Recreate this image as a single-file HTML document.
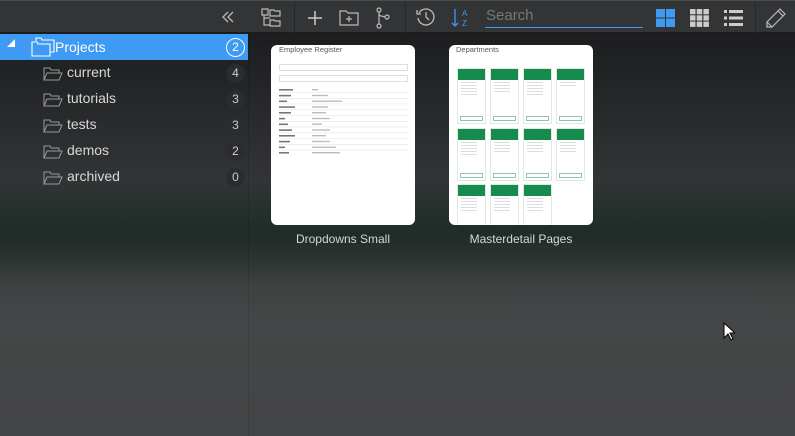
<!DOCTYPE html>
<html><head><meta charset="utf-8"><style>
*{box-sizing:border-box;margin:0;padding:0}
body{width:795px;height:436px;overflow:hidden;position:relative;font-family:"Liberation Sans",sans-serif;
background:linear-gradient(180deg,#1b1c1e 0px,#1d1e20 40px,#2a2c2e 130px,#323436 180px,#24302b 215px,#1f2c27 235px,#2d3431 260px,#3f4142 285px,#454647 320px,#434445 436px);}
.tb{position:absolute;left:0;top:0;width:795px;height:33px;background:#333436;border-top:1px solid #4a4b4d;border-bottom:1px solid #1a1a1b}
.sep{position:absolute;top:1px;width:1px;height:32px;background:#26272a}
.ic{position:absolute}
.side-line{position:absolute;left:248px;top:33px;width:1px;height:403px;background:rgba(0,0,0,.12)}
.sel{position:absolute;left:0;top:34px;width:248px;height:26px;background:#3e9af3}
.row{position:absolute;left:0;width:248px;height:26px;color:#d8d8d8;font-size:14px}
.row .t{position:absolute;left:67px;top:4px}
.badge{position:absolute;left:226px;top:4px;width:19px;height:19px;border-radius:50%;background:#2b2c2e;color:#ccc;font-size:12px;text-align:center;line-height:19px}
.card{position:absolute;top:45px;width:144px;height:180px;background:#fff;border-radius:6px;overflow:hidden}
.lbl{position:absolute;top:232px;color:#d6d6d6;font-size:12px;text-align:center;width:170px}
.dc{position:absolute;width:29px;border:1px solid #dfe8e3;background:#fff}
.dc .h{height:11px;background:#178a4e}
.dc .b{position:absolute;left:2px;right:2px;bottom:2px;height:5px;border:1px solid #8cc8a8}
.dc i{display:block;height:1px;background:#ddd;margin:2px 3px 0;width:60%}
</style></head><body>
<div class="tb">
  <svg class="ic" style="left:220px;top:9px" width="16" height="14" viewBox="0 0 16 14" fill="none" stroke="#bbb" stroke-width="1.3"><path d="M8 2L3 7l5 5M13 2L8 7l5 5"/></svg>
  <svg class="ic" style="left:260px;top:7px" width="22" height="20" viewBox="0 0 22 20" fill="none" stroke="#bbb" stroke-width="1.2"><path d="M2 1h6v6H2zM4 7v10h6M4 10h6M10 2h4l1 1h5v5h-10zM10 12h4l1 1h5v5h-10z"/></svg>
  <div class="sep" style="left:294px"></div>
  <svg class="ic" style="left:307px;top:9px" width="16" height="16" stroke="#ccc" stroke-width="1.5"><path d="M8 1v14M1 8h14"/></svg>
  <svg class="ic" style="left:339px;top:8px" width="20" height="17" viewBox="0 0 20 17" fill="none" stroke="#bbb" stroke-width="1.2"><path d="M1 2h6l2 2h10v12H1zM10 7v6M7 10h6"/></svg>
  <svg class="ic" style="left:375px;top:6px" width="16" height="22" viewBox="0 0 16 22" fill="none" stroke="#bbb" stroke-width="1.2"><circle cx="4" cy="3" r="2"/><circle cx="4" cy="19" r="2"/><circle cx="12" cy="10" r="2"/><path d="M4 5v12M4 7c0 3 6 2 6 3"/></svg>
  <div class="sep" style="left:405px"></div>
  <svg class="ic" style="left:416px;top:6px" width="20" height="20" viewBox="0 0 20 20" fill="none" stroke="#bbb" stroke-width="1.3"><path d="M3 6A8 8 0 1 1 2 11M1 3v4h4M10 5v5l3 3"/></svg>
  <svg class="ic" style="left:451px;top:7px" width="20" height="20" viewBox="0 0 20 20" fill="none" stroke="#3e9af3" stroke-width="1.3"><path d="M4 1v17M1 15l3 3 3-3"/><text x="11" y="8" font-size="8" fill="#3e9af3" stroke="none" font-family="Liberation Sans">A</text><text x="11" y="18" font-size="8" fill="#3e9af3" stroke="none" font-family="Liberation Sans">Z</text></svg>
  <div class="ic" style="left:485px;top:6px;width:158px;height:21px;border-bottom:1px solid #3e9af3;color:#777;font-size:15px;padding-left:1px">Search</div>
  <svg class="ic" style="left:656px;top:8px" width="19" height="18"><rect x="0" y="0" width="9" height="8.5" fill="#3e9af3"/><rect x="10" y="0" width="9" height="8.5" fill="#3e9af3"/><rect x="0" y="9.5" width="9" height="8.5" fill="#3e9af3"/><rect x="10" y="9.5" width="9" height="8.5" fill="#3e9af3"/></svg>
  <svg class="ic" style="left:690px;top:8px" width="19" height="18" fill="#ccc"><rect x="0" y="0" width="5.5" height="5.3"/><rect x="6.7" y="0" width="5.5" height="5.3"/><rect x="13.4" y="0" width="5.5" height="5.3"/><rect x="0" y="6.3" width="5.5" height="5.3"/><rect x="6.7" y="6.3" width="5.5" height="5.3"/><rect x="13.4" y="6.3" width="5.5" height="5.3"/><rect x="0" y="12.6" width="5.5" height="5.3"/><rect x="6.7" y="12.6" width="5.5" height="5.3"/><rect x="13.4" y="12.6" width="5.5" height="5.3"/></svg>
  <svg class="ic" style="left:724px;top:9px" width="19" height="16" fill="#ccc"><rect x="0" y="0" width="3" height="3"/><rect x="5" y="0" width="14" height="3"/><rect x="0" y="6.5" width="3" height="3"/><rect x="5" y="6.5" width="14" height="3"/><rect x="0" y="13" width="3" height="3"/><rect x="5" y="13" width="14" height="3"/></svg>
  <div class="sep" style="left:755px"></div>
  <svg class="ic" style="left:765px;top:6px" width="22" height="22" viewBox="0 0 22 22" fill="none" stroke="#bbb" stroke-width="1.2"><path d="M15 2l5 5L7 20H2v-5zM13 4l5 5M2 15l5 5"/></svg>
</div>
<div class="side-line"></div>
<div class="sel"></div>
<svg class="ic" style="left:6px;top:38px" width="10" height="10"><path d="M1 9L9 1V9Z" fill="#fff"/></svg>
<svg class="ic" style="left:31px;top:37px" width="24" height="20" viewBox="0 0 24 20" fill="none" stroke="#fff" stroke-width="1.1"><path d="M5 4V1h5l1 2h12v12h-4M1 5h5l1 2h12v12H1z"/></svg>
<div class="ic" style="left:55px;top:39px;color:#fff;font-size:14px">Projects</div>
<div class="ic" style="left:226px;top:38px;width:19px;height:19px;border-radius:50%;border:1.3px solid #fff;color:#fff;font-size:12px;text-align:center;line-height:17px">2</div>

<div class="row" style="top:60px"><svg class="ic" style="left:43px;top:7px" width="20" height="14" viewBox="0 0 20 14" fill="none" stroke="#999" stroke-width="1"><path d="M1 13V1h6l1 2h8v3M1 13l3-7h15l-3 7z"/></svg><span class="t">current</span><span class="badge">4</span></div>
<div class="row" style="top:86px"><svg class="ic" style="left:43px;top:7px" width="20" height="14" viewBox="0 0 20 14" fill="none" stroke="#999" stroke-width="1"><path d="M1 13V1h6l1 2h8v3M1 13l3-7h15l-3 7z"/></svg><span class="t">tutorials</span><span class="badge">3</span></div>
<div class="row" style="top:112px"><svg class="ic" style="left:43px;top:7px" width="20" height="14" viewBox="0 0 20 14" fill="none" stroke="#999" stroke-width="1"><path d="M1 13V1h6l1 2h8v3M1 13l3-7h15l-3 7z"/></svg><span class="t">tests</span><span class="badge">3</span></div>
<div class="row" style="top:138px"><svg class="ic" style="left:43px;top:7px" width="20" height="14" viewBox="0 0 20 14" fill="none" stroke="#999" stroke-width="1"><path d="M1 13V1h6l1 2h8v3M1 13l3-7h15l-3 7z"/></svg><span class="t">demos</span><span class="badge">2</span></div>
<div class="row" style="top:164px"><svg class="ic" style="left:43px;top:7px" width="20" height="14" viewBox="0 0 20 14" fill="none" stroke="#999" stroke-width="1"><path d="M1 13V1h6l1 2h8v3M1 13l3-7h15l-3 7z"/></svg><span class="t">archived</span><span class="badge">0</span></div>

<div class="card" style="left:271px">
  <div style="position:absolute;left:8px;top:0px;font-size:7.5px;color:#555">Employee Register</div>
  <div style="position:absolute;left:8px;top:19px;width:129px;height:7px;border:1px solid #ddd;border-radius:1px"></div>
  <div style="position:absolute;left:8px;top:30px;width:129px;height:7px;border:1px solid #ddd;border-radius:1px"></div>
  <svg style="position:absolute;left:8px;top:42px" width="130" height="68">
    <g stroke="#e4e4e4" stroke-width="0.6"><path d="M0 5.5h129M0 11.3h129M0 17h129M0 22.8h129M0 28.5h129M0 34.3h129M0 40h129M0 45.8h129M0 51.5h129M0 57.3h129M0 63h129"/></g>
    <g fill="#777"><rect x="0" y="2" width="14" height="1.6"/><rect x="0" y="7.8" width="12" height="1.6"/><rect x="0" y="13.5" width="8" height="1.6"/><rect x="0" y="19.3" width="16" height="1.6"/><rect x="0" y="25" width="12" height="1.6"/><rect x="0" y="30.8" width="6" height="1.6"/><rect x="0" y="36.5" width="9" height="1.6"/><rect x="0" y="42.3" width="13" height="1.6"/><rect x="0" y="48" width="16" height="1.6"/><rect x="0" y="53.8" width="11" height="1.6"/><rect x="0" y="59.5" width="6" height="1.6"/><rect x="0" y="65" width="10" height="1.6"/></g>
    <g fill="#bbb"><rect x="33" y="2" width="6" height="1.4"/><rect x="33" y="7.8" width="16" height="1.4"/><rect x="33" y="13.5" width="30" height="1.4"/><rect x="33" y="19.3" width="16" height="1.4"/><rect x="33" y="25" width="14" height="1.4"/><rect x="33" y="30.8" width="18" height="1.4"/><rect x="33" y="36.5" width="10" height="1.4"/><rect x="33" y="42.3" width="18" height="1.4"/><rect x="33" y="48" width="14" height="1.4"/><rect x="33" y="53.8" width="18" height="1.4"/><rect x="33" y="59.5" width="24" height="1.4"/><rect x="33" y="65" width="28" height="1.4"/></g>
  </svg>
</div>
<div class="card" style="left:449px">
  <div style="position:absolute;left:7px;top:0px;font-size:7.5px;color:#555">Departments</div>
  <div class="dc" style="left:8px;top:23px;height:56px"><div class="h"></div><i></i><i></i><i></i><i></i><i></i><div class="b"></div></div>
  <div class="dc" style="left:41px;top:23px;height:56px"><div class="h"></div><i></i><i></i><i></i><i></i><div class="b"></div></div>
  <div class="dc" style="left:74px;top:23px;height:56px"><div class="h"></div><i></i><i></i><i></i><i></i><i></i><div class="b"></div></div>
  <div class="dc" style="left:107px;top:23px;height:56px"><div class="h"></div><i></i><i></i><div class="b"></div></div>
  <div class="dc" style="left:8px;top:83px;height:53px"><div class="h"></div><i></i><i></i><i></i><i></i><i></i><div class="b"></div></div>
  <div class="dc" style="left:41px;top:83px;height:53px"><div class="h"></div><i></i><i></i><i></i><i></i><div class="b"></div></div>
  <div class="dc" style="left:74px;top:83px;height:53px"><div class="h"></div><i></i><i></i><i></i><i></i><div class="b"></div></div>
  <div class="dc" style="left:107px;top:83px;height:53px"><div class="h"></div><i></i><i></i><i></i><i></i><div class="b"></div></div>
  <div class="dc" style="left:8px;top:139px;height:50px"><div class="h"></div><i></i><i></i><i></i><i></i><i></i></div>
  <div class="dc" style="left:41px;top:139px;height:50px"><div class="h"></div><i></i><i></i><i></i><i></i><i></i></div>
  <div class="dc" style="left:74px;top:139px;height:50px"><div class="h"></div><i></i><i></i><i></i><i></i><i></i></div>
</div>
<div class="lbl" style="left:258px">Dropdowns Small</div>
<div class="lbl" style="left:436px">Masterdetail Pages</div>
<svg class="ic" style="left:723px;top:322px" width="12" height="19" viewBox="0 0 12 19"><path d="M1 1v15l4-4 3 6 2-1-3-6h5z" fill="#fff" stroke="#000" stroke-width="1"/></svg>
</body></html>
